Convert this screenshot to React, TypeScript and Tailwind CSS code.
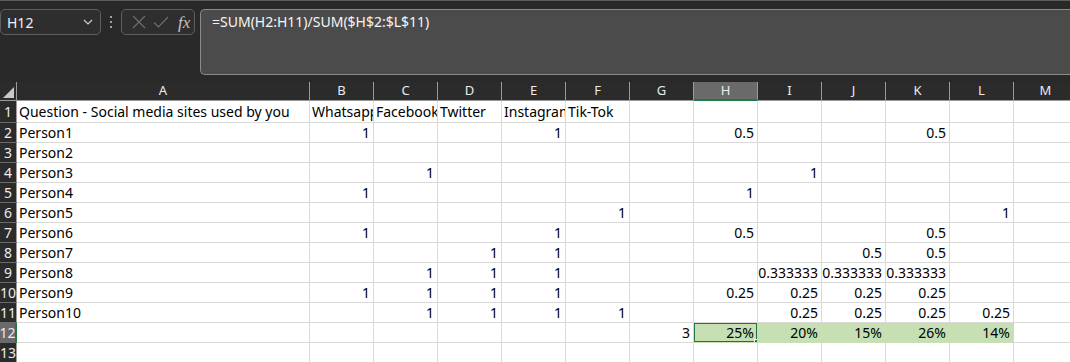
import clsx from "clsx";

const COLS = ["A", "B", "C", "D", "E", "F", "G", "H", "I", "J", "K", "L", "M"];

// cell contents per row, keyed by column letter
const ROWS: Record<string, string>[] = [
  {
    A: "Question - Social media sites used by you",
    B: "Whatsapp",
    C: "Facebook",
    D: "Twitter",
    E: "Instagram",
    F: "Tik-Tok",
  },
  { A: "Person1", B: "1", E: "1", H: "0.5", K: "0.5" },
  { A: "Person2" },
  { A: "Person3", C: "1", I: "1" },
  { A: "Person4", B: "1", H: "1" },
  { A: "Person5", F: "1", L: "1" },
  { A: "Person6", B: "1", E: "1", H: "0.5", K: "0.5" },
  { A: "Person7", D: "1", E: "1", J: "0.5", K: "0.5" },
  { A: "Person8", C: "1", D: "1", E: "1", I: "0.333333", J: "0.333333", K: "0.333333" },
  { A: "Person9", B: "1", C: "1", D: "1", E: "1", H: "0.25", I: "0.25", J: "0.25", K: "0.25" },
  { A: "Person10", C: "1", D: "1", E: "1", F: "1", I: "0.25", J: "0.25", K: "0.25", L: "0.25" },
  { G: "3", H: "25%", I: "20%", J: "15%", K: "26%", L: "14%" },
  {},
];

const GREEN = ["H", "I", "J", "K", "L"];

function isNumber(v: string) {
  return /^[0-9.]+%?$/.test(v);
}

function Toolbar() {
  return (
    <div className="flex h-[82px] shrink-0 items-start border-t border-[#5c5c5c] bg-[#292929] pt-[8px]">
      {/* name box */}
      <div className="flex h-[26px] w-[101px] items-center justify-between rounded-[5px] border border-[#5e5e5e] bg-[#2e2e2e] pl-[6px] pr-[7px] text-[14px] text-[#f2f2f2]">
        <span>H12</span>
        <svg width="10" height="6" viewBox="0 0 10 6" fill="none">
          <path d="M1 1l4 4 4-4" stroke="#cfcfcf" strokeWidth="1.2" />
        </svg>
      </div>
      <div className="flex h-[26px] w-[20px] flex-col items-center justify-center gap-[3px]">
        <span className="h-[2px] w-[2px] bg-[#a0a0a0]" />
        <span className="h-[2px] w-[2px] bg-[#a0a0a0]" />
        <span className="h-[2px] w-[2px] bg-[#a0a0a0]" />
      </div>
      {/* cancel / enter / fx */}
      <div className="flex h-[26px] w-[74px] items-center gap-[7px] rounded-[5px] border border-[#5e5e5e] bg-[#2e2e2e] pl-[10px]">
        <svg width="14" height="14" viewBox="0 0 14 14" fill="none">
          <path d="M1 1l12 12M13 1L1 13" stroke="#6f6f6f" strokeWidth="1.1" />
        </svg>
        <svg width="16" height="12" viewBox="0 0 16 12" fill="none">
          <path d="M1 6.5l4.5 4.5L15 1" stroke="#6f6f6f" strokeWidth="1.1" />
        </svg>
        <span className="ml-[2px] font-['Liberation_Serif',serif] text-[17px] italic leading-none text-[#c4c4c4]">
          fx
        </span>
      </div>
      {/* formula bar */}
      <div className="ml-[5px] h-[66px] flex-1 rounded-l-[5px] border border-r-0 border-[#8a8a8a] bg-[#4b4b4b] pl-[11px] pt-[1px] text-[14px] text-[#f5f5f5]">
        =SUM(H2:H11)/SUM($H$2:$L$11)
      </div>
    </div>
  );
}

function HeaderRow() {
  return (
    <>
      <div className="relative border-b border-r border-[#9a9a9a] bg-[#2b2b2b]">
        <svg className="absolute bottom-[2px] right-[2px]" width="11" height="11" viewBox="0 0 11 11">
          <path d="M11 0V11H0Z" fill="#c8c8c8" />
        </svg>
      </div>
      {COLS.map((c) => (
        <div
          key={c}
          className={clsx(
            "flex items-center justify-center border-r text-[13px] text-[#ececec]",
            c === "H"
              ? "border-b-2 border-b-[#1d7a45] border-r-[#9a9a9a] bg-[#6a6a6a]"
              : "border-b border-[#9a9a9a] bg-[#2b2b2b]",
          )}
        >
          {c}
        </div>
      ))}
    </>
  );
}

function Row({ n, cells }: { n: number; cells: Record<string, string> }) {
  const sel = n === 12;
  return (
    <>
      <div
        className={clsx(
          "flex items-center justify-center overflow-hidden whitespace-nowrap border-b border-[#6a6a6a] text-[14px] text-[#ececec]",
          sel ? "border-r-2 border-r-[#1d7a45] bg-[#6a6a6a]" : "border-r border-r-[#9a9a9a] bg-[#2b2b2b]",
        )}
      >
        {n}
      </div>
      {COLS.map((c) => {
        const v = cells[c];
        const green = n === 12 && GREEN.includes(c);
        return (
          <div
            key={c}
            className={clsx(
              "relative flex items-center overflow-hidden whitespace-nowrap border-b border-r pt-[1px] text-[14px] leading-none text-black",
              green ? "border-[#c6e0b4] bg-[#c6e0b4]" : "border-[#d9d9d9] bg-white",
              v && isNumber(v) ? "justify-end pr-[3px]" : "pl-[2px]",
            )}
          >
            {v}
            {n === 12 && c === "H" && (
              <span className="pointer-events-none absolute inset-[-1px] border-2 border-[#217346]">
                <span className="absolute bottom-[-4px] right-[-4px] h-[6px] w-[6px] border border-white bg-[#217346]" />
              </span>
            )}
          </div>
        );
      })}
    </>
  );
}

export default function App() {
  return (
    <div className="flex h-[362px] w-[1070px] flex-col overflow-hidden bg-[#292929] font-['Noto_Sans',sans-serif]">
      <Toolbar />
      <div className="grid grid-cols-[17px_293px_repeat(12,64px)] grid-rows-[19px_22px_repeat(12,20px)]">
        <HeaderRow />
        {ROWS.map((cells, i) => (
          <Row key={i} n={i + 1} cells={cells} />
        ))}
      </div>
    </div>
  );
}
